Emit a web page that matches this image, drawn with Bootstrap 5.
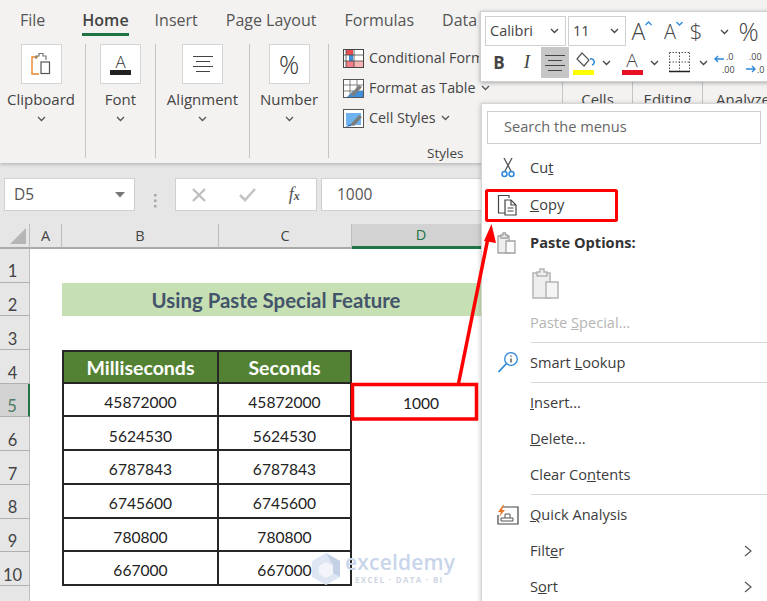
<!DOCTYPE html>
<html lang="en">
<head>
<meta charset="utf-8">
<title>Using Paste Special Feature</title>
<link href="https://cdn.jsdelivr.net/npm/bootstrap@5.3.0/dist/css/bootstrap.min.css" rel="stylesheet">
<style>
html,body{margin:0;background:#e6e6e6}
.shot{position:relative;width:767px;height:601px;overflow:hidden;font-family:"Open Sans","Noto Sans",sans-serif;font-size:14px;color:#444;background:#fff}
.ribbon{position:relative;z-index:2;height:163px;background:#f3f2f1;box-shadow:0 1px 4px rgba(0,0,0,.25)}
.tabs{height:35px;padding-left:20px;font-size:16px;line-height:40px;color:#555;white-space:nowrap}
.tab{margin-right:28px;height:35px}
.tab-file{margin-right:37px}
.tab-home{margin-right:26px;font-weight:600;color:#444;border-bottom:3px solid #217346;height:36px}
.groups{margin-top:9px;height:114px;white-space:nowrap}
.grp{border-right:1.5px solid #c4c4c4;flex:none;text-align:center;line-height:20px;font-size:15px}
.g1{width:86px;padding-right:3px}.g2{width:70px}.g3{width:94px}.g4{width:79px}
.g5{width:234px;padding-left:14px;text-align:left;font-size:14.3px}.g6,.g7{width:70px}.g8{width:80px;border-right:0}
.ibox{width:41px;height:40px;margin:0 auto 5px;background:#fff;border:1px solid #d5d5d5;display:flex;align-items:center;justify-content:center}
.chv{display:block;margin:7px auto 0}
.bigpct{font-size:25px;font-weight:300;color:#333}
.fontA{position:relative;display:block;font-size:17px;line-height:17px;color:#333;border-bottom:5px solid #222;width:21px;text-align:center;font-weight:300}
.srow{height:30px;display:flex;align-items:center;gap:5px;margin-top:-1px;margin-bottom:1px}
.clip-t{display:block;width:110px;overflow:hidden}
.slabel{margin-top:auto;margin-bottom:0;font-size:13.5px;line-height:10px;padding-left:84px}
.rlabel{padding-top:45px}
.fbar{height:61px;background:#e6e6e6;padding:15px 0 0 4px}
.fbox{background:#fff;border:1px solid #d0d0d0;height:33px;font-size:15.5px;color:#555}
.fname{width:131px;padding:0 9px}
.fdots{width:40px}
.fctl{width:142px;margin-right:4px}
.finput{flex:1;padding-left:15px}
.fxi{font-family:"Liberation Serif",serif;font-style:italic;font-size:18px;color:#555}
.fxi span{font-size:12px;font-weight:700}
.sheet{display:grid;grid-template-columns:30px 32px 157px 133px 138px 1fr;grid-template-rows:25px repeat(10,33.7px) 1fr;height:377px;background:#fff;font-family:Lato,"Open Sans",sans-serif;font-size:15.6px;color:#222}
.gc{display:flex;align-items:center;justify-content:center;min-width:0}
.chd{background:#e6e6e6;border-right:1px solid #bdbdbd;border-bottom:2px solid #aaa;font-family:"Open Sans",sans-serif;font-size:14.5px;color:#444}
.chd-on{background:#d2d2d2;border-bottom:3px solid #217346;color:#217346;border-right:0}
.rhd{background:#e6e6e6;border-right:1px solid #bdbdbd;border-bottom:1px solid #b0b0b0;color:#444;font-size:16.5px;padding-right:4px;padding-top:13px}
.rhd-on{background:#d2d2d2;border-right:2px solid #217346;color:#4d7a62}
.cornr{background:#e6e6e6;border-right:1px solid #bdbdbd;border-bottom:2px solid #aaa;align-items:flex-end;justify-content:flex-end;padding:0 3px 3px 0}
.ttl{grid-column:3 / 6;background:#c6e0b4;color:#44546a;font-weight:700;font-size:20.4px;padding-top:1px}
.tc{border-right:2px solid #262626;border-bottom:2px solid #262626;background:#fff;padding-top:6px}
.tc-l{border-left:2px solid #262626}
.th1{background:#548235;color:#fff;font-weight:700;font-size:19.5px;border-top:2px solid #262626;padding-top:1px}
.dval{padding-top:6px}
.mini{position:absolute;z-index:5;left:480px;top:11px;width:290px;height:71px;background:#fff;border:1px solid #d0d0d0;box-shadow:0 1px 4px rgba(0,0,0,.3);padding:4px 0 0 4px;color:#444}
.mrow{height:31px}
.sel{height:30px;border:1px solid #d0d0d0;padding:0 6px 0 4px;font-size:14.5px;color:#444;line-height:28px}
.sel1{width:81px;margin-right:2px}.sel2{width:58px;margin-right:2px}
.slot{display:flex;align-items:center;justify-content:center;flex:none}
.bA{font-size:23px;line-height:1;font-weight:300;color:#444}
.pct{font-size:25px;line-height:1;font-weight:300;color:#444;margin-left:7px}
.tbB{font-size:17px;font-weight:700}
.tbI{font-family:"Liberation Serif",serif;font-style:italic;font-size:19px}
.tbon{background:#c6c6c6;height:31px}
.chev1{width:14px;margin-left:12px}
.ctx{left:481px;top:103px;width:290px;height:510px;padding:7px 0 0;margin:0;border:0;border-left:1px solid #d5d5d5;border-top:1px solid #d5d5d5;border-radius:0;box-shadow:0 1px 5px rgba(0,0,0,.25);font-size:14.6px;color:#3c3c3c;z-index:4;display:block}
.srch{margin:0 6px 6px 5px;width:274px;height:33px;border:1px solid #cfcfcf;padding:0 16px;font-size:14.6px;line-height:29px;color:#666}
.mit{height:36px;padding:0;display:flex;align-items:center;color:#3c3c3c;background:none}
.mic{width:48px;padding-left:15px;flex:none;display:flex;align-items:center}
.mit-copy{margin-top:1px}
.mit-po{margin-top:2px;font-weight:700;color:#333}
.mit-ic{height:44px;padding-left:50px;display:flex;align-items:center}
.mit-dis{color:#b5b5b5}
.mdv{height:1px;margin:1px 0 2px 49px;background:#d6d6d6;opacity:1;border:0}
.mgo{margin-left:auto;margin-right:19px;display:flex}
.wm{position:absolute;z-index:3;left:312px;top:553px;display:flex;align-items:flex-start;gap:5px;pointer-events:none}
.wmt{margin-top:-4px}
.wm1{font-size:21px;line-height:27px;font-weight:600;color:#c9d5ea;display:block;letter-spacing:.2px}
.wm2{font-size:8px;line-height:8px;font-weight:700;color:#cfd6e3;display:block;letter-spacing:1.3px;padding-left:10px;white-space:nowrap}
.marks{position:absolute;z-index:6;left:0;top:0;pointer-events:none}
</style>
</head>
<body>
<div class="shot">

<div class="ribbon">
  <nav class="tabs d-flex">
    <span class="tab tab-file">File</span><span class="tab tab-home">Home</span><span class="tab">Insert</span><span class="tab">Page Layout</span><span class="tab">Formulas</span><span class="tab">Data</span>
  </nav>
  <div class="groups d-flex">
    <div class="grp g1">
      <div class="ibox"><svg width="22" height="24" viewBox="0 0 22 24" fill="none"><path d="M8 5H2v17h7" stroke="#e8872b" stroke-width="1.4"/><path d="M6 7V4h3V1.5h4V4h3v4" stroke="#777" stroke-width="1.2"/><rect x="11" y="10" width="8.5" height="11.5" fill="#fff" stroke="#555" stroke-width="1.2"/></svg></div>
      Clipboard<svg width="9" height="6" viewBox="0 0 9 6" class="chv" fill="none"><path d="M1 1l3.5 3.5L8 1" stroke="#555" stroke-width="1.3"/></svg>
    </div>
    <div class="grp g2">
      <div class="ibox"><span class="fontA">A</span></div>
      Font<svg width="9" height="6" viewBox="0 0 9 6" class="chv" fill="none"><path d="M1 1l3.5 3.5L8 1" stroke="#555" stroke-width="1.3"/></svg>
    </div>
    <div class="grp g3">
      <div class="ibox"><svg width="20" height="18" viewBox="0 0 20 18" stroke="#444" stroke-width="1.1"><path d="M0 1.5h20M3 6.5h14M0 11.5h20M3 16.5h14"/></svg></div>
      Alignment<svg width="9" height="6" viewBox="0 0 9 6" class="chv" fill="none"><path d="M1 1l3.5 3.5L8 1" stroke="#555" stroke-width="1.3"/></svg>
    </div>
    <div class="grp g4">
      <div class="ibox"><span class="bigpct">%</span></div>
      Number<svg width="9" height="6" viewBox="0 0 9 6" class="chv" fill="none"><path d="M1 1l3.5 3.5L8 1" stroke="#555" stroke-width="1.3"/></svg>
    </div>
    <div class="grp g5 d-flex flex-column">
      <div class="srow"><svg width="21" height="19" viewBox="0 0 21 19" fill="none"><rect x=".5" y=".5" width="20" height="18" fill="#fff" stroke="#444"/><path d="M3 1h7v5H3z" fill="#e84c4c"/><path d="M6 6h4v6H6z" fill="#3f8fdc"/><path d="M3 12h8v6H3z" fill="#f27e8a"/><path d="M11 12h9v6h-9z" fill="#f9b4b4"/><path d="M1 6h19M1 12h19M3 1v17M11 1v17" stroke="#444" stroke-width=".8"/></svg><span class="clip-t">Conditional Form</span></div>
      <div class="srow"><svg width="21" height="19" viewBox="0 0 21 19" fill="none"><rect x=".5" y=".5" width="20" height="18" fill="#fff" stroke="#555"/><path d="M1 6h19M1 12h19M7 1v17M14 1v17" stroke="#666" stroke-width=".8"/><path d="M10 12h10v6H4z" fill="#3f8fdc"/><path d="M7 16l9-10 3 2-8 9z" fill="#7d7d7d"/></svg><span>Format as Table</span><svg width="9" height="6" viewBox="0 0 9 6" fill="none"><path d="M1 1l3.5 3.5L8 1" stroke="#555" stroke-width="1.3"/></svg></div>
      <div class="srow"><svg width="21" height="19" viewBox="0 0 21 19" fill="none"><rect x=".5" y=".5" width="20" height="18" fill="#fff" stroke="#555"/><rect x="3" y="4" width="15" height="12" fill="#6eb3ee"/><path d="M7 16l9-10 3 2-8 9z" fill="#7d7d7d"/><path d="M2 18l5-3 2 2z" fill="#2d76c4"/></svg><span>Cell Styles</span><svg width="9" height="6" viewBox="0 0 9 6" fill="none"><path d="M1 1l3.5 3.5L8 1" stroke="#555" stroke-width="1.3"/></svg></div>
      <div class="slabel">Styles</div>
    </div>
    <div class="grp g6 rlabel">Cells</div>
    <div class="grp g7 rlabel">Editing</div>
    <div class="grp g8 rlabel">Analyze</div>
  </div>
</div>

<div class="fbar d-flex">
  <div class="fbox fname d-flex align-items-center justify-content-between"><span>D5</span><svg width="10" height="6" viewBox="0 0 10 6"><path d="M0 0h10L5 5.500z" fill="#777"/></svg></div>
  <div class="fdots d-flex flex-column align-items-center justify-content-center" aria-hidden="true"><svg width="4" height="14" viewBox="0 0 4 14" fill="#a8a8a8"><rect x="1" y="0" width="2.500" height="2.500"/><rect x="1" y="5.500" width="2.500" height="2.500"/><rect x="1" y="11" width="2.500" height="2.500"/></svg></div>
  <div class="fbox fctl d-flex align-items-center justify-content-around">
    <svg width="14" height="14" viewBox="0 0 14 14" stroke="#bdbdbd" stroke-width="2.200"><path d="M1 1l12 12M13 1L1 13"/></svg>
    <svg width="17" height="14" viewBox="0 0 17 14" fill="none" stroke="#c4c4c4" stroke-width="2.600"><path d="M1 7l5 5L16 1"/></svg>
    <span class="fxi">f<span>x</span></span>
  </div>
  <div class="fbox finput d-flex align-items-center">1000</div>
</div>

<div class="sheet">
  <div class="gc cornr"><svg width="16" height="16" viewBox="0 0 16 16"><path d="M16 0v16H0z" fill="#b5b5b5"/></svg></div><div class="gc chd">A</div><div class="gc chd">B</div><div class="gc chd">C</div><div class="gc chd chd-on">D</div><div class="gc chd"></div>

  <div class="gc rhd">1</div><div></div><div></div><div></div><div></div><div></div>
  <div class="gc rhd">2</div><div></div><div class="gc ttl">Using Paste Special Feature</div><div></div>
  <div class="gc rhd">3</div><div></div><div></div><div></div><div></div><div></div>
  <div class="gc rhd">4</div><div></div><div class="gc tc tc-l th1">Milliseconds</div><div class="gc tc th1">Seconds</div><div></div><div></div>
  <div class="gc rhd rhd-on">5</div><div></div><div class="gc tc tc-l">45872000</div><div class="gc tc">45872000</div><div class="gc dval">1000</div><div></div>
  <div class="gc rhd">6</div><div></div><div class="gc tc tc-l">5624530</div><div class="gc tc">5624530</div><div></div><div></div>
  <div class="gc rhd">7</div><div></div><div class="gc tc tc-l">6787843</div><div class="gc tc">6787843</div><div></div><div></div>
  <div class="gc rhd">8</div><div></div><div class="gc tc tc-l">6745600</div><div class="gc tc">6745600</div><div></div><div></div>
  <div class="gc rhd">9</div><div></div><div class="gc tc tc-l">780800</div><div class="gc tc">780800</div><div></div><div></div>
  <div class="gc rhd">10</div><div></div><div class="gc tc tc-l">667000</div><div class="gc tc">667000</div><div></div><div></div>
  <div class="gc rhd border-bottom-0"></div>
</div>

<div class="wm">
  <svg width="28" height="32" viewBox="0 0 28 32"><path d="M14 0l14 8v16l-14 8L0 24V8z" fill="#dfe6f3"/><path d="M14 0l14 8v16l-7-4V12z" fill="#c4d0e6"/><path d="M7 13l7-4 7 4v8l-7 4-7-4z" fill="#f3f5fa"/></svg>
  <div class="wmt"><span class="wm1">exceldemy</span><span class="wm2">EXCEL · DATA · BI</span></div>
</div>

<div class="mini">
  <div class="mrow d-flex">
    <div class="sel sel1 d-flex justify-content-between align-items-center"><span>Calibri</span><svg width="9" height="6" viewBox="0 0 9 6" fill="none"><path d="M1 1l3.500 3.500L8 1" stroke="#444" stroke-width="1.300"/></svg></div>
    <div class="sel sel2 d-flex justify-content-between align-items-center"><span>11</span><svg width="9" height="6" viewBox="0 0 9 6" fill="none"><path d="M1 1l3.500 3.500L8 1" stroke="#444" stroke-width="1.300"/></svg></div>
    <div class="slot" style="width:28px"><span class="bA">A</span><svg class="mb-3" width="7" height="5" viewBox="0 0 7 5" fill="none"><path d="M.5 4l3-3 3 3" stroke="#2b88d8" stroke-width="1.300"/></svg></div>
    <div class="slot ms-1" style="width:27px"><span class="bA fs-5">A</span><svg class="mb-3" width="7" height="5" viewBox="0 0 7 5" fill="none"><path d="M.5 1l3 3 3-3" stroke="#2b88d8" stroke-width="1.300"/></svg></div>
    <div class="slot" style="width:18px"><span class="fs-4 fw-light">$</span></div>
    <div class="slot chev1"><svg width="9" height="6" viewBox="0 0 9 6" fill="none"><path d="M1 1l3.500 3.500L8 1" stroke="#444" stroke-width="1.300"/></svg></div>
    <div class="slot" style="width:28px"><span class="pct">%</span></div>
  </div>
  <div class="mrow d-flex">
    <div class="slot tbB" style="width:28px">B</div>
    <div class="slot tbI" style="width:28px">I</div>
    <div class="slot tbon" style="width:28px"><svg width="20" height="18" viewBox="0 0 20 18" stroke="#444" stroke-width="1.200"><path d="M0 1.500h20M3 6.500h14M0 11.500h20M3 16.500h14"/></svg></div>
    <div class="slot" style="width:30px"><svg width="22" height="24" viewBox="0 0 22 24" fill="none"><path d="M9 2l7 7-5 6-7-7z" stroke="#555" stroke-width="1.200"/><path d="M17 8a3 3 0 0 1 2 6" stroke="#2b88d8" stroke-width="1.500"/><rect y="19" width="21" height="5" fill="#ffff00"/></svg></div>
    <div class="slot" style="width:14px"><svg width="9" height="6" viewBox="0 0 9 6" fill="none"><path d="M1 1l3.500 3.500L8 1" stroke="#444" stroke-width="1.300"/></svg></div>
    <div class="slot ps-1" style="width:34px"><span class="bA d-block text-center lh-1" style="width:21px;border-bottom:5px solid #e81123;font-size:19px">A</span></div>
    <div class="slot" style="width:14px"><svg width="9" height="6" viewBox="0 0 9 6" fill="none"><path d="M1 1l3.500 3.500L8 1" stroke="#444" stroke-width="1.300"/></svg></div>
    <div class="slot" style="width:36px"><svg width="21" height="21" viewBox="0 0 21 21" fill="none"><path d="M.5.500h20M.5.500v19M20.500.500v19M10.500.500v19M.5 10h20" stroke="#555" stroke-dasharray="1.500 1.500"/><path d="M0 19.500h21" stroke="#222" stroke-width="1.500"/></svg></div>
    <div class="slot" style="width:12px"><svg width="9" height="6" viewBox="0 0 9 6" fill="none"><path d="M1 1l3.500 3.500L8 1" stroke="#444" stroke-width="1.300"/></svg></div>
    <div class="slot ms-1" style="width:30px"><svg width="30" height="24" viewBox="0 0 30 24" fill="none"><path d="M11 8H2m3-3L2 8l3 3" stroke="#2b88d8" stroke-width="1.300"/><text x="13" y="9" font-size="9" fill="#444">.0</text><text x="9" y="22" font-size="9" fill="#444">.00</text></svg></div>
    <div class="slot" style="width:30px"><svg width="30" height="24" viewBox="0 0 30 24" fill="none"><path d="M3 18h9m-3-3l3 3-3 3" stroke="#2b88d8" stroke-width="1.300"/><text x="6" y="9" font-size="9" fill="#444">.00</text><text x="14" y="22" font-size="9" fill="#444">.0</text></svg></div>
  </div>
</div>

<div class="dropdown-menu ctx">
  <div class="srch">Search the menus</div>
  <div class="mit"><span class="mic"><svg width="22" height="22" viewBox="0 0 22 22" fill="none"><path d="M7 1l7 13M15 1L8 14" stroke="#555" stroke-width="1.300"/><circle cx="7.500" cy="17" r="2.500" stroke="#2b88d8" stroke-width="1.500"/><circle cx="14.500" cy="17" r="2.500" stroke="#2b88d8" stroke-width="1.500"/></svg></span><span>Cu<u>t</u></span></div>
  <div class="mit mit-copy"><span class="mic"><svg width="22" height="22" viewBox="0 0 22 22" fill="none" stroke="#444" stroke-width="1.200"><path d="M8 19H1.500V1.500H12V4"/><path d="M8 6h6l5 5v10H8z"/><path d="M14 6v5h5M10.500 14h6M10.500 17h6"/></svg></span><span><u>C</u>opy</span></div>
  <div class="mit mit-po"><span class="mic"><svg width="20" height="22" viewBox="0 0 20 22" fill="#eee" stroke="#a3a3a3" stroke-width="1.300"><path d="M1 4h11v17H1z"/><path d="M4 6V3h2V1h2.500v2h2v3z"/><path d="M9 9h9v12H9z" fill="#fafafa"/></svg></span><span>Paste Options:</span></div>
  <div class="mit-ic"><svg width="27" height="31" viewBox="0 0 27 31" fill="#eee" stroke="#b4b4b4" stroke-width="1.500"><path d="M1 5h17v25H1z"/><path d="M5 8V4h3V1h4v3h3v4z"/><path d="M14 14h12v16H14z" fill="#f5f5f5"/></svg></div>
  <div class="mit mit-dis"><span class="mic"></span><span>Paste <u>S</u>pecial...</span></div>
  <hr class="mdv">
  <div class="mit"><span class="mic"><svg width="22" height="22" viewBox="0 0 22 22" fill="none" stroke="#2b88d8" stroke-width="1.300"><circle cx="14" cy="7" r="6.300"/><path d="M9.500 11.500L1.500 20" stroke-width="1.800"/><path d="M14 6.500v4M14 3.500v1.300" stroke="#444"/></svg></span><span>Smart <u>L</u>ookup</span></div>
  <hr class="mdv">
  <div class="mit"><span class="mic"></span><span><u>I</u>nsert...</span></div>
  <div class="mit"><span class="mic"></span><span><u>D</u>elete...</span></div>
  <div class="mit"><span class="mic"></span><span>Clear Co<u>n</u>tents</span></div>
  <hr class="mdv">
  <div class="mit"><span class="mic"><svg width="22" height="20" viewBox="0 0 22 20" fill="none"><path d="M6 2h15v17H1v-9" stroke="#444" stroke-width="1.200"/><path d="M6 13h10v3H4v-3zM8 13V9h5v4" stroke="#555"/><path d="M6 0L1 7h3l-2 5 6-7H5l2-5z" fill="#e8762b"/></svg></span><span><u>Q</u>uick Analysis</span></div>
  <div class="mit"><span class="mic"></span><span>Filt<u>e</u>r</span><span class="mgo"><svg width="8" height="12" viewBox="0 0 8 12" fill="none"><path d="M1 1l6 5-6 5" stroke="#555" stroke-width="1.200"/></svg></span></div>
  <div class="mit"><span class="mic"></span><span>S<u>o</u>rt</span><span class="mgo"><svg width="8" height="12" viewBox="0 0 8 12" fill="none"><path d="M1 1l6 5-6 5" stroke="#555" stroke-width="1.200"/></svg></span></div>
</div>

<svg class="marks" width="767" height="601" viewBox="0 0 767 601" fill="none">
  <rect x="486.500" y="190.500" width="130" height="30" rx="1" stroke="#f00" stroke-width="3"/>
  <rect x="352.500" y="384.500" width="124" height="34.500" stroke="#f00" stroke-width="3.500"/>
  <path d="M458 386L488 238" stroke="#f00" stroke-width="3.500"/>
  <path d="M491.500 224L496 243 484 241z" fill="#f00"/>
</svg>

</div>
<script src="https://cdn.jsdelivr.net/npm/bootstrap@5.3.0/dist/js/bootstrap.bundle.min.js"></script>
</body>
</html>
